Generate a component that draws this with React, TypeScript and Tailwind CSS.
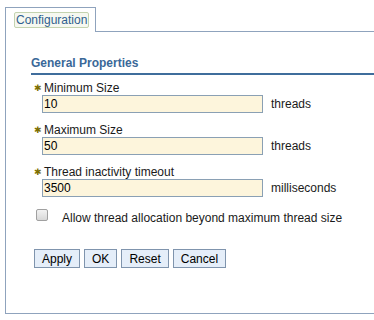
import React from 'react';

const fields = [
  { label: 'Minimum Size', value: '10', unit: 'threads' },
  { label: 'Maximum Size', value: '50', unit: 'threads' },
  { label: 'Thread inactivity timeout', value: '3500', unit: 'milliseconds' },
];

function Field({ label, value, unit }: { label: string; value: string; unit: string }) {
  return (
    <div className="flex flex-col pl-[3px]">
      <div className="flex items-center h-[14px]">
        <span className="text-[#7d6f00] text-[9px] w-[10px] leading-none">✱</span>
        <span className="text-[12px] leading-[14px] text-[#1a1a1a]">{label}</span>
      </div>
      <div className="flex items-center pl-[8px]">
        <input
          defaultValue={value}
          className="w-[221px] h-[18px] bg-[#fdf5dc] border border-[#8aa0b4] px-[1px] text-[12px] text-black outline-none"
        />
        <span className="ml-[8px] text-[12px] text-[#1a1a1a]">{unit}</span>
      </div>
    </div>
  );
}

export default function App() {
  return (
    <div className="w-[374px] h-[320px] bg-white font-['Liberation_Sans',Arial,sans-serif] pt-[7px] pl-[5px] overflow-hidden">
      <div className="flex">
        <div className="w-[91px] h-[25px] border-t border-l border-r border-[#8fa3bd] flex items-start pl-[8px] pt-[4px]">
          <span className="text-[12px] leading-[14px] text-[#2f5f8f] bg-[#f6f8f0] border border-[#c4d3b0] rounded-[2px] px-[1px]">
            Configuration
          </span>
        </div>
        <div className="flex-1 border-b border-[#8fa3bd]" />
      </div>
      <div className="h-[282px] border-l border-b border-[#8fa3bd] pl-[25px] pt-[24px]">
        <div className="text-[12px] font-bold text-[#3a6898] leading-[14px] pb-[3px] border-b-2 border-[#3f6d9c]">
          General Properties
        </div>
        <div className="flex flex-col gap-[10px] mt-[6px]">
          {fields.map((f) => (
            <Field key={f.label} {...f} />
          ))}
        </div>
        <label className="flex items-start mt-[12px] pl-[5px]">
          <span className="w-[12px] h-[12px] rounded-[2px] border border-[#a0a0a0] bg-gradient-to-b from-[#f2f2f2] to-[#d8d8d8]" />
          <span className="ml-[14px] mt-[2px] text-[12px] leading-[14px] text-[#1a1a1a]">
            Allow thread allocation beyond maximum thread size
          </span>
        </label>
        <div className="flex gap-[4px] mt-[24px] pl-[3px]">
          {['Apply', 'OK', 'Reset', 'Cancel'].map((b) => (
            <button
              key={b}
              className="h-[19px] px-[7px] bg-[#e5eef9] border border-[#7f94ad] text-[12px] leading-none text-black"
            >
              {b}
            </button>
          ))}
        </div>
      </div>
    </div>
  );
}
